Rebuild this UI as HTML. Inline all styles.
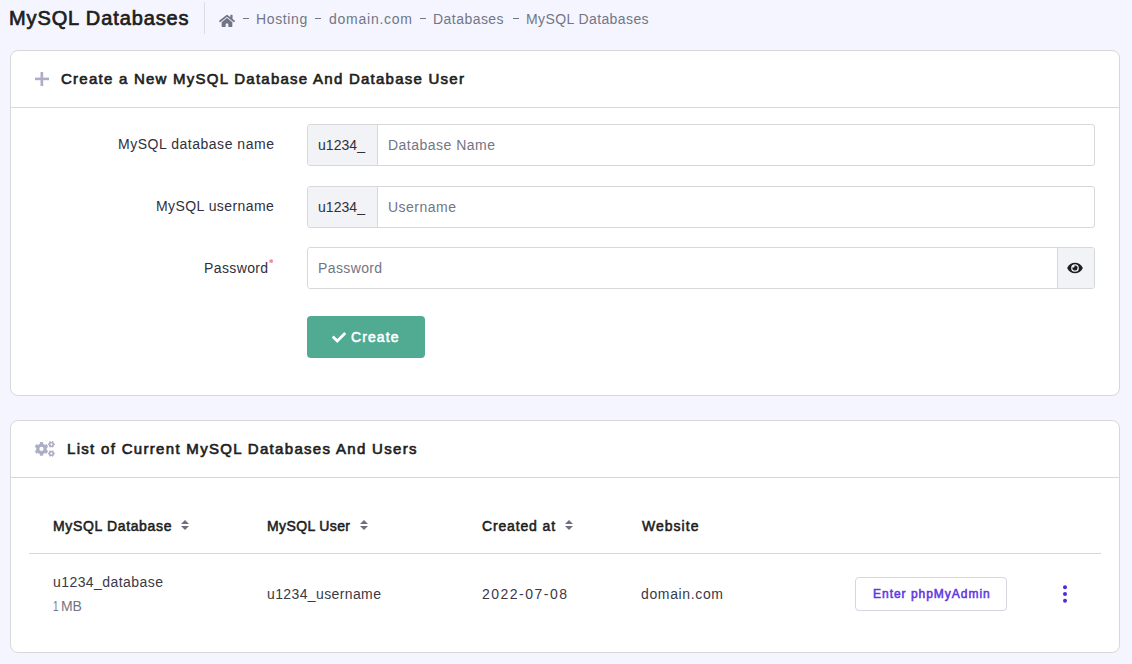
<!DOCTYPE html>
<html>
<head>
<meta charset="utf-8">
<style>
html,body{margin:0;padding:0;}
body{width:1132px;height:664px;overflow:hidden;background:#f4f5ff;position:relative;font-family:"Liberation Sans",sans-serif;color:#1d1e20;}
.a{position:absolute;white-space:pre;line-height:normal;}
.t14{font-size:14px;}
.sb{font-weight:400;-webkit-text-stroke:0.55px currentColor;}
.card{position:absolute;left:10px;width:1110px;box-sizing:border-box;border:1px solid #d8d8db;border-radius:8px;background:#fff;}
.hline{position:absolute;height:1px;background:#d8d8db;}
.grp{position:absolute;left:307px;width:788px;height:42px;box-sizing:border-box;border:1px solid #d8d8db;border-radius:3px;background:#fff;overflow:hidden;}
.pre{position:absolute;left:0;top:0;bottom:0;width:69px;background:#f2f3f6;border-right:1px solid #d8d8db;}
.lbl{color:#302f3d;}
.ph{color:#727586;}
.dat{color:#3a3947;}
.crumb{color:#727586;font-size:14px;}
.dash{position:absolute;top:18px;width:6px;height:1px;background:#727586;}
.dot{position:absolute;left:1063px;width:4px;height:4px;border-radius:50%;background:#5a30dc;}
</style>
</head>
<body>
<!-- page header -->
<div class="a" style="left:9px;top:7px;font-size:20px;letter-spacing:0.89px;-webkit-text-stroke:0.7px currentColor;">MySQL Databases</div>
<div style="position:absolute;left:204px;top:2px;width:1px;height:32px;background:#dcdde4;"></div>
<svg style="position:absolute;left:219px;top:14px;" width="16" height="13" viewBox="0 -48 576 480" preserveAspectRatio="none"><path fill="#727586" d="M280.37 148.26L96 300.11V464a16 16 0 0 0 16 16l112.06-.29a16 16 0 0 0 15.92-16V368a16 16 0 0 1 16-16h64a16 16 0 0 1 16 16v95.64a16 16 0 0 0 16 16.05L464 480a16 16 0 0 0 16-16V300L295.67 148.26a12.19 12.19 0 0 0-15.3 0zM571.6 251.47L488 182.56V44.05a12 12 0 0 0-12-12h-56a12 12 0 0 0-12 12v72.61L318.47 43a48 48 0 0 0-61 0L4.34 251.47a12 12 0 0 0-1.6 16.9l25.5 31A12 12 0 0 0 45.15 301l235.22-193.74a12.19 12.19 0 0 1 15.3 0L530.9 301a12 12 0 0 0 16.9-1.6l25.5-31a12 12 0 0 0-1.7-16.93z" transform="translate(0,-48)"/></svg>
<div class="dash" style="left:243px;"></div>
<div class="a crumb" style="left:256px;top:11px;letter-spacing:0.62px;">Hosting</div>
<div class="dash" style="left:315px;"></div>
<div class="a crumb" style="left:329px;top:11px;letter-spacing:0.75px;">domain.com</div>
<div class="dash" style="left:420px;"></div>
<div class="a crumb" style="left:433px;top:11px;letter-spacing:0.46px;">Databases</div>
<div class="dash" style="left:513px;"></div>
<div class="a crumb" style="left:526px;top:11px;letter-spacing:0.4px;">MySQL Databases</div>

<!-- card 1 -->
<div class="card" style="top:50px;height:346px;"></div>
<div class="hline" style="left:11px;top:107px;width:1108px;"></div>
<svg style="position:absolute;left:35px;top:72px;" width="14" height="14" viewBox="0 0 14 14"><g fill="#adadc7"><rect x="0" y="5.6" width="14" height="2.6"/><rect x="5.5" y="0" width="2.7" height="14"/></g></svg>
<div class="a" style="left:61px;top:70px;font-size:15px;letter-spacing:1.25px;-webkit-text-stroke:0.65px currentColor;">Create a New MySQL Database And Database User</div>

<div class="a t14 lbl" style="left:118px;top:136px;letter-spacing:0.52px;">MySQL database name</div>
<div class="grp" style="top:124px;"><div class="pre"></div></div>
<div class="a t14 lbl" style="left:318px;top:137px;letter-spacing:0.04px;">u1234_</div>
<div class="a t14 ph" style="left:388px;top:137px;letter-spacing:0.48px;">Database Name</div>

<div class="a t14 lbl" style="left:156px;top:198px;letter-spacing:0.43px;">MySQL username</div>
<div class="grp" style="top:186px;"><div class="pre"></div></div>
<div class="a t14 lbl" style="left:318px;top:199px;letter-spacing:0.04px;">u1234_</div>
<div class="a t14 ph" style="left:388px;top:199px;letter-spacing:0.48px;">Username</div>

<div class="a t14 lbl" style="left:204px;top:260px;letter-spacing:0.38px;">Password</div>
<svg style="position:absolute;left:269px;top:259px;" width="4.4" height="4.4" viewBox="-2.5 -2.5 5 5"><g stroke="#f4879f" stroke-width="1.3" stroke-linecap="round"><line x1="0" y1="-2" x2="0" y2="2"/><line x1="-1.75" y1="-1" x2="1.75" y2="1"/><line x1="-1.75" y1="1" x2="1.75" y2="-1"/></g></svg>
<div class="grp" style="top:247px;"><div style="position:absolute;right:0;top:0;bottom:0;width:36px;background:#f2f3f6;border-left:1px solid #d8d8db;"></div></div>
<div class="a t14 ph" style="left:318px;top:260px;letter-spacing:0.38px;">Password</div>
<svg style="position:absolute;left:1067px;top:262px;" width="16" height="12" viewBox="0 32 576 448"><path fill="#1d1e20" d="M572.52 241.4C518.29 135.59 410.93 64 288 64S57.68 135.64 3.48 241.41a32.35 32.35 0 0 0 0 29.19C57.71 376.41 165.07 448 288 448s230.32-71.64 284.52-177.41a32.35 32.35 0 0 0 0-29.19zM288 400a144 144 0 1 1 144-144 143.93 143.93 0 0 1-144 144zm0-240a95.31 95.31 0 0 0-25.31 3.79 47.85 47.85 0 0 1-66.9 66.9A95.78 95.78 0 1 0 288 160z"/></svg>

<div style="position:absolute;left:307px;top:316px;width:118px;height:42px;border-radius:4px;background:#50ab92;"></div>
<svg style="position:absolute;left:332px;top:331.5px;" width="14" height="11" viewBox="0 64 512 384"><path fill="#fff" d="M173.898 439.404l-166.4-166.4c-9.997-9.997-9.997-26.206 0-36.204l36.203-36.204c9.997-9.998 26.207-9.998 36.204 0L192 312.69 432.095 72.596c9.997-9.997 26.207-9.997 36.204 0l36.203 36.204c9.997 9.997 9.997 26.206 0 36.204l-294.4 294.401c-9.998 9.997-26.207 9.997-36.204-.001z"/></svg>
<div class="a sb" style="left:351px;top:329px;font-size:14px;letter-spacing:1.08px;color:#fff;">Create</div>

<!-- card 2 -->
<div class="card" style="top:420px;height:233px;"></div>
<div class="hline" style="left:11px;top:477px;width:1108px;"></div>
<svg style="position:absolute;left:34px;top:440px;" width="22" height="18" viewBox="0 0 22 18">
<defs>
<g id="gb"><circle cx="0" cy="0" r="5.3"/><rect x="-1.6" y="-6.8" width="3.2" height="13.6"/><rect x="-1.6" y="-6.8" width="3.2" height="13.6" transform="rotate(60)"/><rect x="-1.6" y="-6.8" width="3.2" height="13.6" transform="rotate(120)"/></g>
<g id="gs"><circle cx="0" cy="0" r="2.6"/><rect x="-0.8" y="-3.4" width="1.6" height="6.8" transform="rotate(30)"/><rect x="-0.8" y="-3.4" width="1.6" height="6.8" transform="rotate(90)"/><rect x="-0.8" y="-3.4" width="1.6" height="6.8" transform="rotate(150)"/></g>
</defs>
<g fill="#adadc6"><use href="#gb" transform="translate(7.5 8.9)"/><use href="#gs" transform="translate(17.4 4.3)"/><use href="#gs" transform="translate(17.4 13.5)"/></g>
<g fill="#fff"><circle cx="7.5" cy="8.9" r="2.1"/><circle cx="17.4" cy="4.3" r="1.1"/><circle cx="17.4" cy="13.5" r="1.1"/></g>
</svg>
<div class="a" style="left:67px;top:440px;font-size:15px;letter-spacing:1.31px;-webkit-text-stroke:0.65px currentColor;">List of Current MySQL Databases And Users</div>

<div class="a sb t14" style="left:53px;top:518px;letter-spacing:0.65px;">MySQL Database</div>
<div class="a sb t14" style="left:267px;top:518px;letter-spacing:0.38px;">MySQL User</div>
<div class="a sb t14" style="left:482px;top:518px;letter-spacing:0.85px;">Created at</div>
<div class="a sb t14" style="left:642px;top:518px;letter-spacing:1.02px;">Website</div>
<svg style="position:absolute;left:181px;top:520px;" width="8" height="10" viewBox="0 0 8 10"><path fill="#6d7081" d="M0 4L4 0L8 4Z M0 6L8 6L4 10Z"/></svg>
<svg style="position:absolute;left:360px;top:520px;" width="8" height="10" viewBox="0 0 8 10"><path fill="#6d7081" d="M0 4L4 0L8 4Z M0 6L8 6L4 10Z"/></svg>
<svg style="position:absolute;left:565px;top:520px;" width="8" height="10" viewBox="0 0 8 10"><path fill="#6d7081" d="M0 4L4 0L8 4Z M0 6L8 6L4 10Z"/></svg>
<div class="hline" style="left:29px;top:553px;width:1072px;"></div>

<div class="a t14 dat" style="left:53px;top:574px;letter-spacing:0.43px;">u1234_database</div>
<div class="a t14 ph" style="left:53px;top:598px;transform:scaleX(0.7);transform-origin:0 0;">1</div>
<div class="a t14 ph" style="left:61px;top:598px;letter-spacing:-0.1px;">MB</div>
<div class="a t14 dat" style="left:267px;top:586px;letter-spacing:0.38px;">u1234_username</div>
<div class="a t14 dat" style="left:482px;top:586px;letter-spacing:1.48px;">2022-07-08</div>
<div class="a t14 dat" style="left:641px;top:586px;letter-spacing:0.64px;">domain.com</div>
<div style="position:absolute;left:855px;top:577px;width:152px;height:34px;box-sizing:border-box;border:1px solid #d5d5e3;border-radius:4px;background:#fff;"></div>
<div class="a sb" style="left:873px;top:587px;font-size:12px;letter-spacing:0.98px;color:#6139e2;">Enter phpMyAdmin</div>
<svg style="position:absolute;left:1061px;top:580px;" width="8" height="28" viewBox="0 0 8 28"><g fill="#5428d8"><circle cx="4" cy="7.3" r="2"/><circle cx="4" cy="14" r="2"/><circle cx="4" cy="20.7" r="2"/></g></svg>
</body>
</html>
